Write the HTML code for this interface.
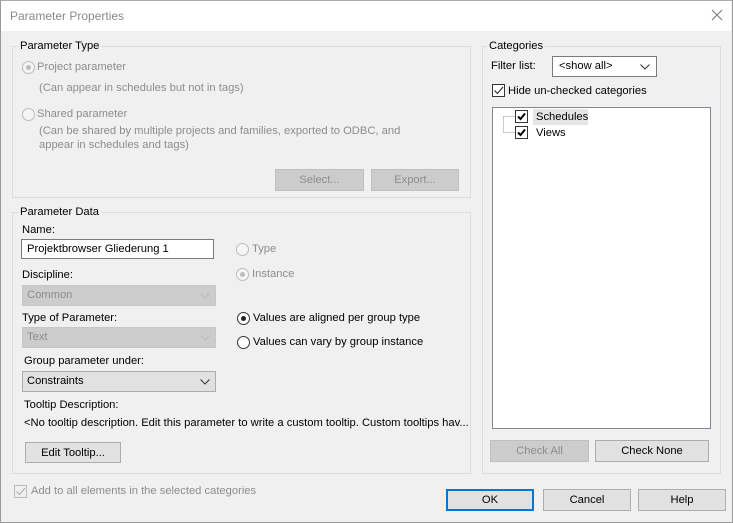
<!DOCTYPE html>
<html><head><meta charset="utf-8"><style>
*{box-sizing:border-box;margin:0;padding:0}
body{width:733px;height:523px;background:#f0f0f0;font-family:"Liberation Sans",Arial,sans-serif;font-size:11.2px;color:#000;position:relative;overflow:hidden}
.a{position:absolute;white-space:nowrap;line-height:14px}
.win{position:absolute;left:0;top:0;width:733px;height:523px;border:1px solid #9a9a9a;border-top-color:#aaa}
.title{position:absolute;left:1px;top:1px;width:730px;height:30px;background:#fff}
.g{position:absolute;border:1px solid #dcdcdc}
.gl{position:absolute;background:#f0f0f0;padding:0 2px;line-height:14px}
.dis{color:#8d8d8d}
.btn{position:absolute;background:#e1e1e1;border:1px solid #adadad;text-align:center;line-height:20px}
.btn.d{background:#cccccc;border-color:#bfbfbf;color:#8d8d8d}
.rad{position:absolute;width:13px;height:13px;border-radius:50%;border:1px solid #333;background:#fff}
.rad.d{border-color:#bcbcbc;background:#f5f5f5}
.rad .dot{position:absolute;left:3px;top:3px;width:5px;height:5px;border-radius:50%;background:#222}
.rad.d .dot{background:#bcbcbc}
.chk{position:absolute;width:13px;height:13px;border:1px solid #333;background:#fff}
.cb{position:absolute;border:1px solid #adadad;background:#e1e1e1;line-height:19px;padding-left:4px}
.cb.d{background:#cccccc;border-color:#c6c6c6;color:#8d8d8d}
.cb svg{position:absolute;right:5px;top:7px}
</style></head><body>
<div class="win"></div>
<div class="title"></div>
<div class="a" style="left:10px;top:9px;color:#8a8a8a;font-size:12px">Parameter Properties</div>
<svg class="a" style="left:711px;top:9px" width="12" height="12"><path d="M1 1L11 11M11 1L1 11" stroke="#777" stroke-width="1"/></svg>

<div class="g" style="left:12px;top:46px;width:459px;height:152px"></div>
<div class="gl" style="left:18px;top:39px">Parameter Type</div>
<div class="rad d" style="left:22px;top:61px"><div class="dot"></div></div>
<div class="a dis" style="left:37px;top:60px">Project parameter</div>
<div class="a dis" style="left:39px;top:81px">(Can appear in schedules but not in tags)</div>
<div class="rad d" style="left:22px;top:108px"></div>
<div class="a dis" style="left:37px;top:107px">Shared parameter</div>
<div class="a dis" style="left:39px;top:124px">(Can be shared by multiple projects and families, exported to ODBC, and</div>
<div class="a dis" style="left:39px;top:138px">appear in schedules and tags)</div>
<div class="btn d" style="left:275px;top:169px;width:89px;height:22px">Select...</div>
<div class="btn d" style="left:371px;top:169px;width:88px;height:22px">Export...</div>

<div class="g" style="left:12px;top:212px;width:459px;height:262px"></div>
<div class="gl" style="left:18px;top:205px">Parameter Data</div>
<div class="a" style="left:22px;top:223px">Name:</div>
<div class="a" style="left:21px;top:239px;width:193px;height:20px;border:1px solid #7a7a7a;background:#fff;padding-left:5px;line-height:18px">Projektbrowser Gliederung 1</div>
<div class="rad d" style="left:236px;top:243px"></div>
<div class="a dis" style="left:252px;top:242px">Type</div>
<div class="rad d" style="left:236px;top:268px"><div class="dot"></div></div>
<div class="a dis" style="left:252px;top:267px">Instance</div>
<div class="a" style="left:22px;top:268px">Discipline:</div>
<div class="cb d" style="left:22px;top:285px;width:194px;height:21px">Common<svg width="10" height="6"><path d="M0.5 0.5L5 5L9.5 0.5" stroke="#bbb" fill="none"/></svg></div>
<div class="a" style="left:22px;top:311px">Type of Parameter:</div>
<div class="cb d" style="left:22px;top:327px;width:194px;height:21px">Text<svg width="10" height="6"><path d="M0.5 0.5L5 5L9.5 0.5" stroke="#bbb" fill="none"/></svg></div>
<div class="rad" style="left:237px;top:312px"><div class="dot"></div></div>
<div class="a" style="left:253px;top:311px">Values are aligned per group type</div>
<div class="rad" style="left:237px;top:336px"></div>
<div class="a" style="left:253px;top:335px">Values can vary by group instance</div>
<div class="a" style="left:24px;top:354px">Group parameter under:</div>
<div class="cb" style="left:22px;top:371px;width:194px;height:21px">Constraints<svg width="10" height="6"><path d="M0.5 0.5L5 5L9.5 0.5" stroke="#333" fill="none"/></svg></div>
<div class="a" style="left:24px;top:398px">Tooltip Description:</div>
<div class="a" style="left:24px;top:416px">&lt;No tooltip description. Edit this parameter to write a custom tooltip. Custom tooltips hav...</div>
<div class="btn" style="left:25px;top:442px;width:96px;height:21px">Edit Tooltip...</div>

<div class="g" style="left:482px;top:46px;width:239px;height:428px"></div>
<div class="gl" style="left:487px;top:39px">Categories</div>
<div class="a" style="left:491px;top:59px">Filter list:</div>
<div class="a" style="left:552px;top:56px;width:105px;height:21px;border:1px solid #7a7a7a;background:#fff;padding-left:6px;line-height:19px">&lt;show all&gt;<svg style="position:absolute;right:6px;top:7px" width="10" height="6"><path d="M0.5 0.5L5 5L9.5 0.5" stroke="#333" fill="none"/></svg></div>
<div class="chk" style="left:492px;top:84px"><svg width="11" height="11" style="position:absolute;left:0;top:0"><path d="M1.5 5.5L4.5 8.5L10 2" stroke="#222" fill="none" stroke-width="1"/></svg></div>
<div class="a" style="left:508px;top:84px">Hide un-checked categories</div>
<div class="a" style="left:492px;top:107px;width:219px;height:322px;border:1px solid #828790;background:#fff"></div>
<svg class="a" style="left:500px;top:112px" width="20" height="25"><path d="M3.5 4.5H15M3.5 4.5V20.5H15" stroke="#999" stroke-dasharray="1 1" fill="none"/></svg>
<div class="chk" style="left:515px;top:110px"><svg width="11" height="11" style="position:absolute;left:0;top:0"><path d="M2 5.5L4.5 8L9 2.5" stroke="#000" fill="none" stroke-width="2"/></svg></div>
<div class="a" style="left:533px;top:109px;width:55px;height:16px;background:#e5e5e5"></div>
<div class="a" style="left:536px;top:110px">Schedules</div>
<div class="chk" style="left:515px;top:126px"><svg width="11" height="11" style="position:absolute;left:0;top:0"><path d="M2 5.5L4.5 8L9 2.5" stroke="#000" fill="none" stroke-width="2"/></svg></div>
<div class="a" style="left:536px;top:126px">Views</div>
<div class="btn d" style="left:490px;top:440px;width:99px;height:22px">Check All</div>
<div class="btn" style="left:595px;top:440px;width:114px;height:22px">Check None</div>

<div class="chk" style="left:14px;top:485px;border-color:#bcbcbc;background:#f0f0f0"><svg width="11" height="11" style="position:absolute;left:0;top:0"><path d="M1.5 5.5L4.5 8.5L10 2" stroke="#aaa" fill="none"/></svg></div>
<div class="a dis" style="left:31px;top:484px">Add to all elements in the selected categories</div>
<div class="btn" style="left:446px;top:489px;width:88px;height:22px;border:2px solid #0078d7;line-height:18px">OK</div>
<div class="btn" style="left:543px;top:489px;width:88px;height:22px">Cancel</div>
<div class="btn" style="left:638px;top:489px;width:88px;height:22px">Help</div>
</body></html>
